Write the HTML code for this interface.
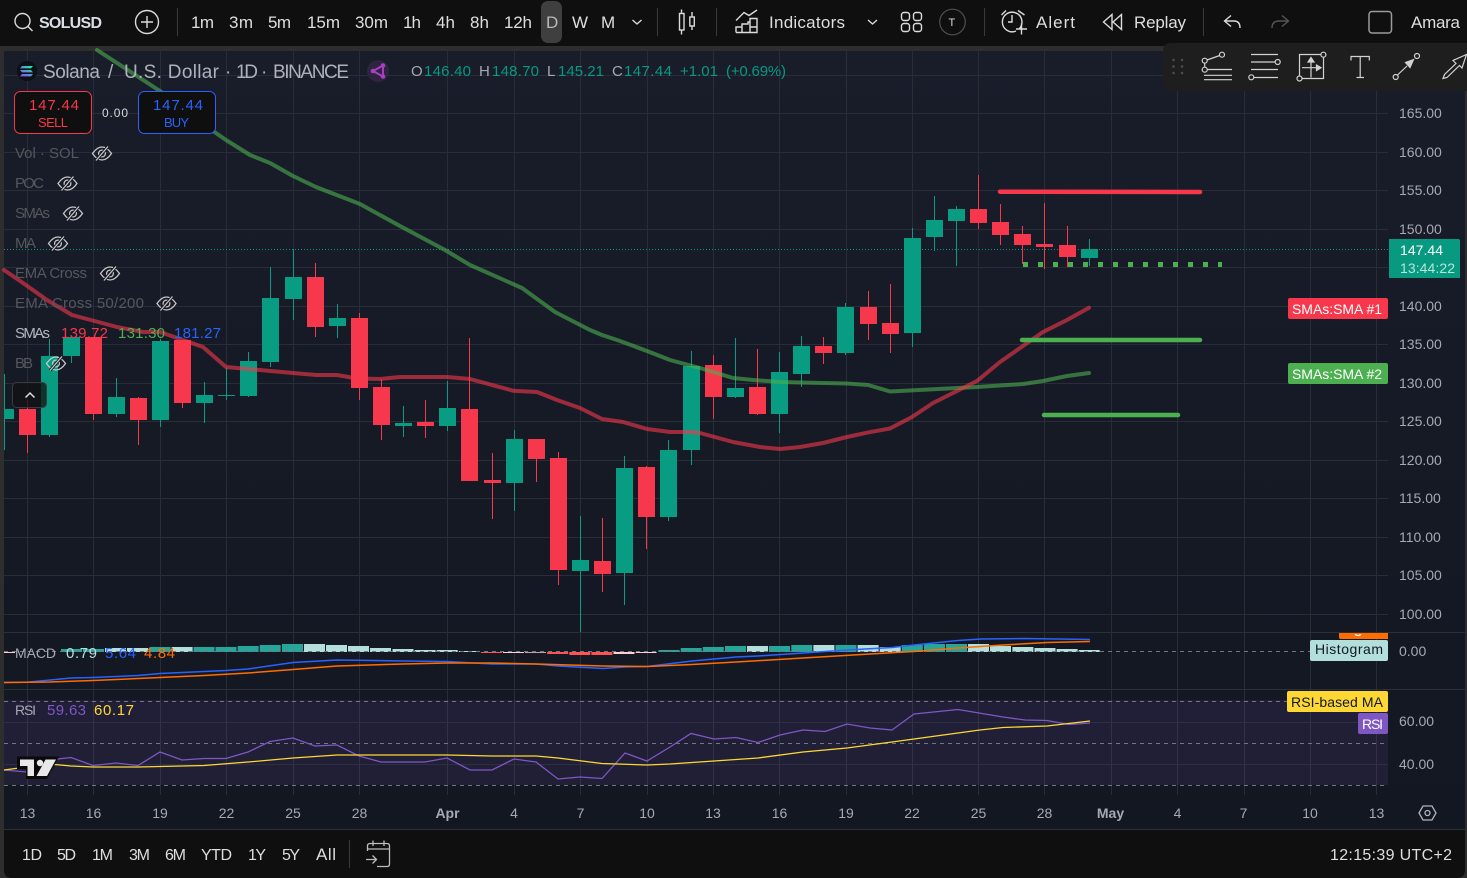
<!DOCTYPE html>
<html><head><meta charset="utf-8"><title>SOLUSD</title>
<style>
html,body{margin:0;padding:0;background:#2e2e2e;width:1467px;height:878px;overflow:hidden}
svg{display:block;font-family:"Liberation Sans",sans-serif}
.tb{font-size:17px;fill:#dedede}
.bb{font-size:16px;fill:#dedede}
.ax{font-size:14px;fill:#a6a9b3}
.tm{font-size:14px;fill:#a6a9b3;text-anchor:middle}
.lg{font-size:15px;fill:#55575d}
.ic{fill:none;stroke:#dbdbdb;stroke-width:1.4}
.dt{fill:none;stroke:#d2d2d2;stroke-width:1.2}
</style></head><body>
<svg width="1467" height="878" viewBox="0 0 1467 878" xmlns="http://www.w3.org/2000/svg">
<defs>
<linearGradient id="bg" x1="0" y1="0" x2="0" y2="1"><stop offset="0" stop-color="#191d2a"/><stop offset=".6" stop-color="#151924"/><stop offset="1" stop-color="#131722"/></linearGradient>
<linearGradient id="sol" x1="0" y1="1" x2="1" y2="0"><stop offset="0" stop-color="#9945ff"/><stop offset=".5" stop-color="#5497d5"/><stop offset="1" stop-color="#19fb9b"/></linearGradient>
<g id="eye" fill="none" stroke="#c6c6c6" stroke-width="1.3"><path d="M-9.5 0Q-5-6.5 0-6.5T9.5 0Q5 6.5 0 6.5T-9.5 0Z"/><circle r="3.4"/><path d="M-6 7L6-7" stroke="#151924" stroke-width="3"/><path d="M-6 7L6-7"/></g>
</defs>
<rect width="1467" height="878" fill="#2e2e2e"/>
<rect x="4" y="51" width="1461" height="780" fill="url(#bg)"/>

<!-- grid -->
<path fill="none" stroke="#292d38" d="M4 75.5H1388M4 113.5H1388M4 152.5H1388M4 190.5H1388M4 229.5H1388M4 267.5H1388M4 306.5H1388M4 344.5H1388M4 383.5H1388M4 421.5H1388M4 460.5H1388M4 498.5H1388M4 537.5H1388M4 575.5H1388M4 614.5H1388M27.5 51V795M93.5 51V795M160.5 51V795M226.5 51V795M293.5 51V795M359.5 51V795M447.5 51V795M514.5 51V795M580.5 51V795M647.5 51V795M713.5 51V795M779.5 51V795M846.5 51V795M912.5 51V795M978.5 51V795M1044.5 51V795M1111.5 51V795M1177.5 51V795M1244.5 51V795M1310.5 51V795M1376.5 51V795"/>
<path fill="none" stroke="#2b2f3a" d="M4 632.5H1465M4 689.5H1465M4 829.5H1465"/>

<!-- RSI band -->
<rect x="4" y="700" width="1384" height="85" fill="#7e57c2" opacity=".13"/>
<path fill="none" stroke="#2e2f40" d="M4 722.5H1388M4 764.5H1388"/>
<path fill="none" stroke="#75767f" stroke-dasharray="4 4" d="M4 701.5H1388M4 743.5H1388M4 785.5H1388"/>

<!-- MACD histogram -->
<path fill="#26a69a" d="M61 649h21v3h-21zM83 649h21v3h-21zM149.5 647h21v5h-21zM193.5 647h21v5h-21zM215.5 647h21v5h-21zM237.6 646h21v6h-21zM259.7 645h21v7h-21zM282 644h21v8h-21zM658.5 650h21v2h-21zM680.7 648h21v4h-21zM702.8 647h21v5h-21zM725 646h21v6h-21zM769 646h21v6h-21zM791.3 645h21v7h-21zM835.5 645h21v7h-21zM901.8 645h21v7h-21zM924 644h21v8h-21zM946 644h21v8h-21z"/>
<path fill="#b2dfdb" d="M105 648h21v4h-21zM127 648h21v4h-21zM171.6 647h21v5h-21zM304 644h21v8h-21zM326 645h21v7h-21zM348 646h21v6h-21zM370 648h21v4h-21zM392.5 649h21v3h-21zM414.6 650h21v2h-21zM436.7 650h21v2h-21zM458.8 651h21v1h-21zM747 646h21v6h-21zM813.4 645h21v7h-21zM857.6 645h21v7h-21zM879.7 647h21v5h-21zM968 644h21v8h-21zM990 646h21v6h-21zM1012.4 647h21v5h-21zM1034.5 648h21v4h-21zM1056.6 649h21v3h-21zM1078.7 650h21v2h-21z"/>
<path fill="#ff5252" d="M480.9 652h21v1h-21zM547.2 652h21v2h-21zM569.3 652h21v3h-21zM591.4 652h21v3h-21z"/>
<path fill="#ffcdd2" d="M4 652h11v1h-11zM503 652h21v1h-21zM525 652h21v.8h-21zM613.5 652h21v2h-21zM635.6 652h21v1h-21z"/>
<path fill="none" stroke="#75767f" stroke-dasharray="4 4" d="M4 651.5H1388"/>
<!-- MACD lines -->
<polyline fill="none" stroke="#2962ff" stroke-width="1.5" points="4,682.5 27,682.3 71,678 93,677.5 138,675.5 160,673.5 226,670.5 248,669 293,662.5 337,660 403,661 447,661.5 492,664 536,664 558,666 603,668.5 625,667 647,666.5 692,661 736,657 758,656 803,653 847,650 892,647.5 914,645 958,640.5 981,639 1025,638.5 1090,639.5"/>
<polyline fill="none" stroke="#ff6d00" stroke-width="1.5" points="4,682.5 49,682 93,680.5 138,678.5 204,675.5 248,673 293,669.5 337,666 403,664 447,663 492,663 536,664 603,666 647,666.5 692,664.5 736,662 803,658 870,654 914,651.5 958,648 1003,645 1047,642.5 1090,641.5"/>
<!-- RSI lines -->
<polyline fill="none" stroke="#7e57c2" stroke-width="1.3" points="4,770 27,772 49,760 71,757.5 93,765.5 116,763 138,765.5 160,752 182,760 204,758.5 226,758.5 248,752 270,741.5 293,738 315,746 337,745 359,756 381,762 425,762 447,758 470,770 492,770 514,759 536,762 558,779 580,777 602,778.5 625,753 647,761 670,747 691,733.5 714,739 736,737.5 758,742.5 780,735 803,730 825,731.5 847,724 870,728 892,730 914,714 958,709.5 1003,717 1025,720 1047,720.5 1069,724.5 1090,723"/>
<polyline fill="none" stroke="#fdd835" stroke-width="1.3" points="4,770 27,767 49,764 71,766 93,767 138,767 160,766.5 204,765.5 248,762 293,758 337,755 447,755 492,756 536,756 558,758 602,763.5 647,765 670,764 714,761 758,758 803,752 847,748 892,742 936,736 980,730 1003,727.5 1047,726 1090,721"/>

<!-- last price line -->
<path stroke="#089981" stroke-dasharray="1 2" d="M4 249.5H1388"/>

<!-- green candles -->
<path fill="#089c82" d="M4 374h1V450h-1zM4 409h10V419h-10zM49 339h1V437h-1zM41 356h17V435h-17zM71 337h1V363h-1zM63 337h17V356h-17zM116 378h1V417h-1zM108 397h17V414h-17zM160 339h1V427h-1zM152 341h17V420h-17zM204 382h1V423h-1zM196 395h17V403h-17zM226 368h1V400h-1zM218 395h17V396h-17zM248 352h1V397h-1zM240 361h17V396h-17zM270 267h1V367h-1zM262 298h17V362h-17zM293 249h1V320h-1zM285 277h17V299h-17zM337 304h1V338h-1zM329 318h17V326h-17zM403 406h1V437h-1zM395 423h17V426h-17zM447 381h1V431h-1zM439 408h17V426h-17zM514 430h1V511h-1zM506 439h17V483h-17zM580 516h1V632h-1zM572 560h17V571h-17zM624 456h1V605h-1zM616 468h17V573h-17zM668 440h1V521h-1zM660 450h17V517h-17zM691 351h1V465h-1zM683 366h17V450h-17zM735 338h1V398h-1zM727 388h17V397h-17zM779 352h1V433h-1zM771 372h17V414h-17zM801 336h1V387h-1zM793 346h17V374h-17zM845 303h1V355h-1zM837 307h17V353h-17zM912 228h1V347h-1zM904 238h17V333h-17zM934 196h1V251h-1zM926 220h17V237h-17zM956 206h1V266h-1zM948 209h17V221h-17zM1089 239h1V266h-1zM1081 249h17V258h-17z"/>
<!-- red candles -->
<path fill="#f7374b" d="M27 400h1V453h-1zM19 409h17V435h-17zM93 337h1V420h-1zM85 337h17V414h-17zM138 397h1V445h-1zM130 398h17V420h-17zM182 340h1V408h-1zM174 340h17V403h-17zM315 263h1V337h-1zM307 277h17V327h-17zM359 313h1V400h-1zM351 318h17V388h-17zM381 379h1V440h-1zM373 387h17V425h-17zM425 400h1V438h-1zM417 422h17V426h-17zM469 338h1V481h-1zM461 409h17V481h-17zM492 453h1V519h-1zM484 480h17V483h-17zM536 439h1V482h-1zM528 439h17V459h-17zM558 452h1V585h-1zM550 458h17V570h-17zM602 518h1V592h-1zM594 561h17V574h-17zM646 466h1V549h-1zM638 467h17V517h-17zM713 355h1V419h-1zM705 365h17V397h-17zM757 349h1V415h-1zM749 387h17V414h-17zM823 337h1V364h-1zM815 346h17V353h-17zM868 291h1V340h-1zM860 307h17V324h-17zM890 284h1V353h-1zM882 323h17V334h-17zM978 175h1V229h-1zM970 209h17V223h-17zM1000 204h1V245h-1zM992 222h17V235h-17zM1022 226h1V264h-1zM1014 234h17V245h-17zM1044 203h1V269h-1zM1036 244h17V247h-17zM1067 226h1V267h-1zM1059 245h17V257h-17z"/>

<!-- moving averages -->
<polyline fill="none" stroke="#4caf50" stroke-opacity=".6" stroke-width="4" stroke-linecap="round" stroke-linejoin="round" points="97,50 160,91 213,131 226,140 250,155 270,163 293,176 316,187 360,204 400,226 445,250 470,265 522,288 555,312 590,330 602,335 620,341 647,351 670,360 700,368 733,378 753,380 780,382 800,382.5 847,383.5 868,385 890,391.5 977,387 1023,384 1043,381 1067,376 1089,373"/>
<polyline fill="none" stroke="#f7374b" stroke-opacity=".6" stroke-width="4" stroke-linecap="round" stroke-linejoin="round" points="4,270 23,283 47,300 72,315 117,327 143,332 160,332 203,347 226,367 293,373 316,375 337,375 357,378.5 380,379 400,377 447,377 470,379 513,390.7 537,392 557,400 580,408 602,419 623,422 647,429 670,432 690,432 700,433 733,442 760,447 780,449 800,447 823,443 847,437 867,432.7 890,428.5 912,417 933,403 977,381 1000,362 1043,332 1067,320 1089,307.7"/>

<!-- horizontal levels -->
<path fill="none" stroke="#f7374b" stroke-width="4.5" stroke-linecap="round" d="M1000 191.7L1200 192"/>
<path fill="none" stroke="#4caf50" stroke-width="4.5" stroke-linecap="round" d="M1022 340H1200M1044 415H1178"/>
<path fill="#4caf50" d="M1023 262h5v5h-5zM1038 262h5v5h-5zM1053 262h5v5h-5zM1068 262h5v5h-5zM1083 262h5v5h-5zM1098 262h5v5h-5zM1113 262h5v5h-5zM1128 262h5v5h-5zM1143 262h5v5h-5zM1158 262h5v5h-5zM1173 262h5v5h-5zM1188 262h5v5h-5zM1203 262h5v5h-5zM1218 262h4v5h-4z"/>

<!-- legend -->
<circle cx="27" cy="71" r="10" fill="#0d1014"/>
<path fill="url(#sol)" d="M22 66h11l-2 2.4H20zM20 70h11l2 2.4H22zM22 74h11l-2 2.4H20z"/>
<g font-size="19" fill="#aeb1ba">
<text x="43" y="78" textLength="57">Solana</text>
<text x="108" y="78">/</text>
<text x="124" y="78" textLength="95">U.S. Dollar</text>
<text x="225" y="78">·</text>
<text x="236" y="78" textLength="22">1D</text>
<text x="261" y="78">·</text>
<text x="273" y="78" textLength="76">BINANCE</text>
</g>
<circle cx="378" cy="71" r="11" fill="#2f2440"/>
<path fill="none" stroke="#a63fc0" stroke-width="2" d="M373 71L383 65.5V76.5Z"/><circle cx="373" cy="71" r="2.300" fill="#a63fc0"/><circle cx="383" cy="65.500" r="2.300" fill="#a63fc0"/><circle cx="383" cy="76.500" r="2.300" fill="#a63fc0"/>
<g font-size="15">
<text x="411" y="76" fill="#a6a9b3">O</text><text x="424" y="76" fill="#089981" textLength="47">146.40</text>
<text x="479" y="76" fill="#a6a9b3">H</text><text x="492" y="76" fill="#089981" textLength="47">148.70</text>
<text x="547" y="76" fill="#a6a9b3">L</text><text x="558" y="76" fill="#089981" textLength="46">145.21</text>
<text x="612" y="76" fill="#a6a9b3">C</text><text x="624" y="76" fill="#089981" textLength="48">147.44</text>
<text x="680" y="76" fill="#089981" textLength="38">+1.01</text><text x="726" y="76" fill="#089981" textLength="60">(+0.69%)</text>
</g>

<rect x="14.500" y="91.500" width="77" height="42" rx="6" fill="#0f0f0f" stroke="#f7374b"/>
<text x="29" y="110" font-size="15" fill="#f7374b" textLength="50">147.44</text>
<text x="38" y="127" font-size="13" fill="#f7374b" textLength="30">SELL</text>
<text x="102" y="117" font-size="12" fill="#d8d8d8" textLength="26">0.00</text>
<rect x="138.500" y="91.500" width="77" height="42" rx="6" fill="#0f0f0f" stroke="#2962ff"/>
<text x="153" y="110" font-size="15" fill="#2962ff" textLength="50">147.44</text>
<text x="164" y="127" font-size="13" fill="#2962ff" textLength="25">BUY</text>

<text class="lg" x="15" y="158" textLength="64">Vol · SOL</text><use href="#eye" x="102" y="153.500"/>
<text class="lg" x="15" y="188" textLength="29">POC</text><use href="#eye" x="67.500" y="183.500"/>
<text class="lg" x="15" y="218" textLength="35">SMAs</text><use href="#eye" x="73" y="213.500"/>
<text class="lg" x="15" y="248" textLength="21">MA</text><use href="#eye" x="58" y="243.500"/>
<text class="lg" x="15" y="278" textLength="72">EMA Cross</text><use href="#eye" x="110" y="273.500"/>
<text class="lg" x="15" y="308" textLength="129">EMA Cross 50/200</text><use href="#eye" x="166.500" y="303.500"/>
<text x="15" y="338" font-size="15" fill="#b2b5be" textLength="35">SMAs</text>
<text x="61" y="338" font-size="15" fill="#f7374b" textLength="47">139.72</text>
<text x="118" y="338" font-size="15" fill="#4caf50" textLength="47">131.30</text>
<text x="174" y="338" font-size="15" fill="#2962ff" textLength="47">181.27</text>
<text class="lg" x="15" y="368" textLength="18">BB</text><use href="#eye" x="56" y="363.500"/>
<rect x="12.500" y="382.500" width="34" height="25" rx="4" fill="#121212" fill-opacity=".75" stroke="#3c3c3c"/>
<path fill="none" stroke="#dcdcdc" stroke-width="1.500" d="M25.500 397.500L30 393L34.500 397.500"/>

<!-- MACD / RSI legends -->
<text x="15" y="658" font-size="14" fill="#a6a9b3" textLength="41">MACD</text>
<text x="66" y="658" font-size="15" fill="#b2dfdb" textLength="31">0.79</text>
<text x="105" y="658" font-size="15" fill="#2962ff" textLength="31">5.64</text>
<text x="144" y="658" font-size="15" fill="#ff6d00" textLength="31">4.84</text>
<text x="15" y="715" font-size="14" fill="#a6a9b3" textLength="21">RSI</text>
<text x="47" y="715" font-size="15" fill="#7e57c2" textLength="39">59.63</text>
<text x="94" y="715" font-size="15" fill="#fdd835" textLength="40">60.17</text>

<!-- TV logo -->
<path d="M17 756.500H59L47 779H26V769H17Z" fill="#0a0a0a"/>
<path fill="#e8e8e8" d="M20 759.500H34V776H27.500V766H20ZM45.500 759.500H56L47 776H36.500Z"/><circle cx="40" cy="763" r="3.200" fill="#e8e8e8"/>

<!-- right axis -->
<g class="ax">
<text x="1399" y="118">165.00</text><text x="1399" y="157">160.00</text><text x="1399" y="195">155.00</text><text x="1399" y="234">150.00</text><text x="1399" y="311">140.00</text><text x="1399" y="349">135.00</text><text x="1399" y="388">130.00</text><text x="1399" y="426">125.00</text><text x="1399" y="465">120.00</text><text x="1399" y="503">115.00</text><text x="1399" y="542">110.00</text><text x="1399" y="580">105.00</text><text x="1399" y="619">100.00</text><text x="1399" y="656">0.00</text><text x="1399" y="726">60.00</text><text x="1399" y="769">40.00</text>
</g>
<path d="M1389 239h69q2 0 2 2v37h-71z" fill="#089981"/>
<text x="1400" y="255" font-size="14" fill="#fff" textLength="43">147.44</text>
<text x="1400" y="273" font-size="14" fill="#b7e4dc" textLength="55">13:44:22</text>
<rect x="1288" y="298" width="100" height="21" rx="2" fill="#f7374b"/>
<text x="1292" y="314" font-size="14" fill="#fff" textLength="90">SMAs:SMA #1</text>
<rect x="1288" y="363" width="100" height="21" rx="2" fill="#4caf50"/>
<text x="1292" y="379" font-size="14" fill="#fff" textLength="90">SMAs:SMA #2</text>
<path d="M1339 633h49v6h-47q-2 0-2-2z" fill="#ff6d00"/>
<path fill="none" stroke="#fff" stroke-width="1.200" d="M1355 634.500Q1358 636.500 1361 634.500"/>
<rect x="1310" y="640" width="78" height="21" rx="2" fill="#b2dfdb"/>
<text x="1315" y="654" font-size="14" fill="#131722" textLength="68">Histogram</text>
<rect x="1287" y="691" width="101" height="21" rx="2" fill="#fdd835"/>
<text x="1291" y="707" font-size="14" fill="#131722" textLength="92">RSI-based MA</text>
<rect x="1358" y="713" width="30" height="21" rx="2" fill="#7e57c2"/>
<text x="1362" y="729" font-size="14" fill="#fff" textLength="21">RSI</text>

<!-- time axis -->
<text class="tm" x="27.500" y="818">13</text><text class="tm" x="93.500" y="818">16</text><text class="tm" x="160" y="818">19</text><text class="tm" x="226.500" y="818">22</text><text class="tm" x="293" y="818">25</text><text class="tm" x="359.500" y="818">28</text><text class="tm" x="447.500" y="818" font-weight="bold">Apr</text><text class="tm" x="514" y="818">4</text><text class="tm" x="580.500" y="818">7</text><text class="tm" x="647" y="818">10</text><text class="tm" x="713" y="818">13</text><text class="tm" x="779.500" y="818">16</text><text class="tm" x="846" y="818">19</text><text class="tm" x="912" y="818">22</text><text class="tm" x="978.500" y="818">25</text><text class="tm" x="1044.500" y="818">28</text><text class="tm" x="1110.500" y="818" font-weight="bold">May</text><text class="tm" x="1177.500" y="818">4</text><text class="tm" x="1243.500" y="818">7</text><text class="tm" x="1310" y="818">10</text><text class="tm" x="1376.500" y="818">13</text>
<path fill="none" stroke="#b2b5be" stroke-width="1.300" d="M1419 813L1423 806H1432L1436 813L1432 820H1423Z"/><circle cx="1427.500" cy="813" r="2.500" fill="none" stroke="#b2b5be" stroke-width="1.300"/>

<!-- top bar -->
<rect width="1467" height="46" fill="#0f0f0f"/>
<circle cx="22.500" cy="21" r="7.500" class="ic" stroke-width="1.600"/><path class="ic" d="M28 26.500L32.500 31"/>
<text x="39" y="28" font-size="16" font-weight="bold" fill="#d9dde4" textLength="63">SOLUSD</text>
<circle cx="147" cy="22" r="11.500" class="ic"/><path class="ic" d="M141 22H153M147 16V28"/>
<path stroke="#3a3a3a" fill="none" d="M177.500 8V36M657.500 8V36M716.500 8V36M984.500 8V36M1203.500 8V36"/>
<g class="tb">
<text x="191" y="28" textLength="23">1m</text><text x="229" y="28" textLength="24">3m</text><text x="268" y="28" textLength="23">5m</text><text x="307" y="28" textLength="33">15m</text><text x="355" y="28" textLength="33">30m</text><text x="403" y="28" textLength="18">1h</text><text x="436" y="28" textLength="19">4h</text><text x="470" y="28" textLength="19">8h</text><text x="504" y="28" textLength="28">12h</text>
</g>
<rect x="541" y="1" width="21" height="42" rx="7" fill="#3f3f3f"/>
<text x="546" y="28" font-size="17" fill="#b9b9b9">D</text>
<text class="tb" x="572" y="28" textLength="15">W</text><text class="tb" x="601" y="28" textLength="14">M</text>
<path class="ic" d="M632.500 20L637 24L641.500 20"/>
<path class="ic" d="M681.500 9.500V13.500M681.500 30V34.500M692 12V17M692 26V30"/><rect class="ic" x="679.500" y="13.500" width="4.500" height="16.500"/><rect class="ic" x="689.800" y="17" width="4.500" height="9"/>
<path class="ic" d="M736 20.500L744 12.500L749 15.500L757 10M736 32.500V27H742V24H748V22H750M750 27H757V18.500H750V32.500M736 32.500H757V27M742 27V32.500M750 22V32.500"/>
<text class="tb" x="769" y="28" textLength="76">Indicators</text>
<path class="ic" d="M868 20L872.500 24L877 20"/>
<rect class="ic" x="901.500" y="12.500" width="8" height="8" rx="2.500"/><rect class="ic" x="913.500" y="12.500" width="8" height="8" rx="2.500"/><rect class="ic" x="901.500" y="23.500" width="8" height="8" rx="2.500"/><rect class="ic" x="913.500" y="23.500" width="8" height="8" rx="2.500"/>
<circle cx="952.500" cy="22" r="12.800" fill="none" stroke="#4f4f4f" stroke-width="1.200"/><text x="948.500" y="26" font-size="11" fill="#dbdbdb">T</text>
<path class="ic" d="M1019 29A9.800 9.800 0 1 0 1016 31M1012 15V22H1008M1001.500 15L1006 10.500M1018 10.500L1024.500 15M1016 29H1027M1021.500 23.500V34.500"/>
<text class="tb" x="1036" y="28" textLength="39">Alert</text>
<path class="ic" stroke-width="1.100" d="M1112 14.500L1103.500 22L1112 29.500ZM1121.500 14.500L1113 22L1121.500 29.500Z"/>
<text class="tb" x="1134" y="28" textLength="52">Replay</text>
<path class="ic" d="M1231 15.500L1224.500 21L1231 26.500M1224.500 21H1234Q1240 21 1240 28"/>
<path fill="none" stroke="#555" stroke-width="1.400" d="M1282 15.500L1288.500 21L1282 26.500M1288.500 21H1279Q1272 21 1272 28"/>
<rect x="1369" y="11.500" width="22.500" height="21.500" rx="3" fill="none" stroke="#9a9a9a" stroke-width="1.500"/>
<text class="tb" x="1411" y="28" textLength="49">Amara</text>

<!-- drawing toolbar -->
<path d="M1467 43H1171Q1163 43 1163 51V83Q1163 91 1171 91H1467Z" fill="#1e1e1e"/>
<g fill="#4c4c4c"><circle cx="1173.500" cy="60" r="1.300"/><circle cx="1182" cy="60" r="1.300"/><circle cx="1173.500" cy="66.500" r="1.300"/><circle cx="1182" cy="66.500" r="1.300"/><circle cx="1173.500" cy="73" r="1.300"/><circle cx="1182" cy="73" r="1.300"/></g>
<g class="dt">
<circle cx="1204.700" cy="60.700" r="2.500"/><circle cx="1222" cy="54.700" r="2.500"/><circle cx="1204.700" cy="69.700" r="2.500"/><path d="M1207 60L1219.700 55.500M1204.700 63.200V67.200M1207.200 69.500H1232M1204 75.300H1232M1204 79.700H1232"/>
<path d="M1251 54.500H1278M1251 62H1275M1251 69.500H1278M1254 77.500H1278"/><circle cx="1277.700" cy="62" r="2.500"/><circle cx="1251.300" cy="77.300" r="2.500"/>
<path d="M1299.500 75.500V54.500H1321M1323.500 57V78.500H1302M1311 77.500V59M1302 67.700H1319"/><path d="M1311 57.500L1308 62H1314ZM1321 67.700L1316.500 65V70.500Z" fill="#d2d2d2"/><circle cx="1323.400" cy="54.700" r="2.500"/><circle cx="1299.500" cy="78.500" r="2.500"/>
<path d="M1351 60.500V56.500H1369.300V60.500M1360.200 56.500V77.500M1356.500 77.500H1364"/>
<circle cx="1395.700" cy="77" r="2.500"/><circle cx="1417" cy="56" r="2.500"/><path d="M1397.500 75L1407 66"/><path d="M1413.500 59.500L1405.500 62.500L1410 67.500Z" fill="#d2d2d2"/>
<path d="M1443 78.500L1444.500 74.500L1456 63.500L1453 60.500L1466.500 54.500L1462 68L1459.500 65.500L1447 77.500Z"/>
</g>

<!-- bottom bar -->
<path d="M4 830H1465V870Q1465 878 1457 878H12Q4 878 4 870Z" fill="#0f0f0f"/>
<g class="bb">
<text x="22" y="860" textLength="20">1D</text><text x="57" y="860" textLength="19">5D</text><text x="92" y="860" textLength="21">1M</text><text x="129" y="860" textLength="21">3M</text><text x="165" y="860" textLength="21">6M</text><text x="201" y="860" textLength="31">YTD</text><text x="248" y="860" textLength="18">1Y</text><text x="282" y="860" textLength="18">5Y</text><text x="316" y="860" font-size="17" textLength="20">All</text>
<text x="1330" y="860" textLength="122">12:15:39 UTC+2</text>
</g>
<path stroke="#3a3a3a" d="M349.500 840V868"/>
<path fill="none" stroke="#bdbdbd" stroke-width="1.300" d="M367.500 851V846Q367.500 843.500 370 843.500H387Q389.500 843.500 389.500 846V864Q389.500 866.500 387 866.500H377M367.500 849H389.500M373 840.500V846M384 840.500V846M366 859.500H376M372.500 855.500L376.500 859.500L372.500 863.500"/>
</svg>
</body></html>
